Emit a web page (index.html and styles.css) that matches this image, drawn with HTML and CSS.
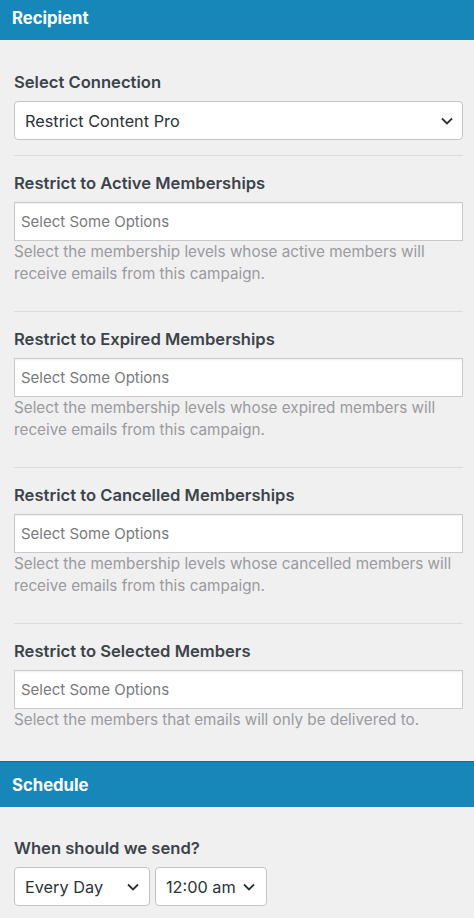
FILE: index.html
```html
<!DOCTYPE html>
<html lang="en">
<head>
    <meta charset="UTF-8">
    <meta name="viewport" content="width=device-width, initial-scale=1.0">
    <title>Campaign Settings</title>
    <link rel="stylesheet" href="styles.css">
</head>
<body>
    <div class="panel">
        <h2 class="panel-title panel-title-first">Recipient</h2>
        <div class="panel-body">
            <div class="field field-first">
                <label class="field-label">Select Connection</label>
                <div class="select select-full">
                    <span>Restrict Content Pro</span>
                    <svg class="chevron" viewBox="0 0 12 8" width="12" height="8"><path d="M1 1.5l5 5 5-5" fill="none" stroke="#2c3338" stroke-width="1.8"/></svg>
                </div>
            </div>

            <div class="field">
                <label class="field-label">Restrict to Active Memberships</label>
                <div class="multi">Select Some Options</div>
                <p class="help">Select the membership levels whose active members will receive emails from this campaign.</p>
            </div>

            <div class="field">
                <label class="field-label">Restrict to Expired Memberships</label>
                <div class="multi">Select Some Options</div>
                <p class="help">Select the membership levels whose expired members will receive emails from this campaign.</p>
            </div>

            <div class="field">
                <label class="field-label">Restrict to Cancelled Memberships</label>
                <div class="multi">Select Some Options</div>
                <p class="help">Select the membership levels whose cancelled members will receive emails from this campaign.</p>
            </div>

            <div class="field field-last">
                <label class="field-label">Restrict to Selected Members</label>
                <div class="multi">Select Some Options</div>
                <p class="help">Select the members that emails will only be delivered to.</p>
            </div>
        </div>

        <h2 class="panel-title">Schedule</h2>
        <div class="panel-body">
            <div class="field field-schedule">
                <label class="field-label">When should we send?</label>
                <div class="row">
                    <div class="select select-day">
                        <span>Every Day</span>
                        <svg class="chevron" viewBox="0 0 12 8" width="12" height="8"><path d="M1 1.5l5 5 5-5" fill="none" stroke="#2c3338" stroke-width="1.8"/></svg>
                    </div>
                    <div class="select select-time">
                        <span>12:00 am</span>
                        <svg class="chevron" viewBox="0 0 12 8" width="12" height="8"><path d="M1 1.5l5 5 5-5" fill="none" stroke="#2c3338" stroke-width="1.8"/></svg>
                    </div>
                </div>
            </div>
        </div>
    </div>
</body>
</html>
```

FILE: styles.css
```css
body {
    margin: 0;
    background: #f0f0f1;
    font-family: 'Inter', 'Liberation Sans', sans-serif;
    color: #3c434a;
}

.panel {
    width: 474px;
    overflow: hidden;
}

.panel-title {
    margin: 0;
    height: 46px;
    box-sizing: border-box;
    padding: 0 12px;
    display: flex;
    align-items: center;
    background: #1787ba;
    border-top: 1px solid #0f6f9c;
    color: #fff;
    font-size: 16.7px;
    font-weight: 700;
}

/* first header is cut off at the top of the view */
.panel-title-first {
    margin-top: -6px;
}

.panel-body {
    padding: 0 11px 0 14px;
}

.field {
    padding: 17px 0 26px;
    border-bottom: 1px solid #dcdcde;
}

.field-first {
    padding: 32px 0 15px;
}

.field-last {
    border-bottom: none;
    padding-bottom: 30px;
}

.field-schedule {
    border-bottom: none;
    padding: 31px 0 20px;
}

.field-label {
    display: block;
    font-size: 16.6px;
    font-weight: 600;
    line-height: 20px;
    color: #3c434a;
    margin-bottom: 9px;
}

.select {
    height: 39px;
    box-sizing: border-box;
    background: #fff;
    border: 1px solid #c3c4c7;
    border-radius: 4px;
    display: flex;
    align-items: center;
    justify-content: space-between;
    padding: 0 9px 0 10px;
    font-size: 16.3px;
    color: #2c3338;
}

.chevron {
    flex: none;
}

.row {
    display: flex;
    gap: 5px;
}

.select-day {
    width: 136px;
    padding-right: 10px;
}

.select-time {
    width: 112px;
    padding-right: 11px;
}

.multi {
    height: 39px;
    box-sizing: border-box;
    background: #fff;
    border: 1px solid #c9c9cc;
    box-shadow: inset 0 1px 2px rgba(0, 0, 0, 0.06);
    display: flex;
    align-items: center;
    padding: 0 6px;
    font-size: 15px;
    color: #7a7a7e;
}

.help {
    margin: 0;
    font-size: 15.25px;
    line-height: 22px;
    color: #9a9a9e;
}
```
